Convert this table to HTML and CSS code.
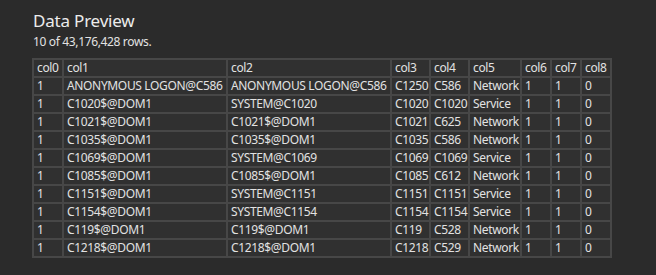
FILE: index.html
```html
<!DOCTYPE html>
<html lang="en">
<head>
    <meta charset="UTF-8">
    <title>Data Preview</title>
    <link rel="stylesheet" href="styles.css">
</head>
<body>
<div class="preview">
    <h1 class="title">Data Preview</h1>
    <p class="count">10 of 43,176,428 rows.</p>
    <table class="grid">
        <thead>
        <tr>
            <th class="c0">col0</th><th class="c1">col1</th><th class="c2">col2</th>
            <th class="c3">col3</th><th class="c4">col4</th><th class="c5">col5</th>
            <th class="c6">col6</th><th class="c7">col7</th><th class="c8">col8</th>
        </tr>
        </thead>
        <tbody>
        <tr><td>1</td><td>ANONYMOUS LOGON@C586</td><td>ANONYMOUS LOGON@C586</td><td>C1250</td><td>C586</td><td>Network</td><td>1</td><td>1</td><td>0</td></tr>
        <tr><td>1</td><td>C1020$@DOM1</td><td>SYSTEM@C1020</td><td>C1020</td><td>C1020</td><td>Service</td><td>1</td><td>1</td><td>0</td></tr>
        <tr><td>1</td><td>C1021$@DOM1</td><td>C1021$@DOM1</td><td>C1021</td><td>C625</td><td>Network</td><td>1</td><td>1</td><td>0</td></tr>
        <tr><td>1</td><td>C1035$@DOM1</td><td>C1035$@DOM1</td><td>C1035</td><td>C586</td><td>Network</td><td>1</td><td>1</td><td>0</td></tr>
        <tr><td>1</td><td>C1069$@DOM1</td><td>SYSTEM@C1069</td><td>C1069</td><td>C1069</td><td>Service</td><td>1</td><td>1</td><td>0</td></tr>
        <tr><td>1</td><td>C1085$@DOM1</td><td>C1085$@DOM1</td><td>C1085</td><td>C612</td><td>Network</td><td>1</td><td>1</td><td>0</td></tr>
        <tr><td>1</td><td>C1151$@DOM1</td><td>SYSTEM@C1151</td><td>C1151</td><td>C1151</td><td>Service</td><td>1</td><td>1</td><td>0</td></tr>
        <tr><td>1</td><td>C1154$@DOM1</td><td>SYSTEM@C1154</td><td>C1154</td><td>C1154</td><td>Service</td><td>1</td><td>1</td><td>0</td></tr>
        <tr><td>1</td><td>C119$@DOM1</td><td>C119$@DOM1</td><td>C119</td><td>C528</td><td>Network</td><td>1</td><td>1</td><td>0</td></tr>
        <tr><td>1</td><td>C1218$@DOM1</td><td>C1218$@DOM1</td><td>C1218</td><td>C529</td><td>Network</td><td>1</td><td>1</td><td>0</td></tr>
        </tbody>
    </table>
</div>
</body>
</html>
```
FILE: styles.css
```css
html,body{margin:0;padding:0;}
body{
    background:#2b2b2b;
    color:#e2e2e2;
    font:12px/1.4 "Noto Sans", "Open Sans", sans-serif;
    letter-spacing:-0.35px;
}
.preview{
    padding:9px 0 0 32px;
}
.title{
    margin:0 0 0 1px;
    font-size:17px;
    font-weight:normal;
    line-height:24px;
    letter-spacing:-0.2px;
    color:#ececec;
}
.count{
    margin:0 0 0 1px;
    line-height:18px;
    height:25px;
}
.grid{
    table-layout:fixed;
    border-spacing:2px;
    background:#474747;
    width:580px;
}
.grid th,.grid td{
    background:#303030;
    height:16px;
    padding:0 0 0 3px;
    font-weight:normal;
    text-align:left;
    white-space:nowrap;
    overflow:hidden;
    line-height:16px;
}
.c0{width:25px;}
.c1{width:159px;}
.c2{width:159px;}
.c3{width:34px;}
.c4{width:34px;}
.c5{width:47px;}
.c6{width:25px;}
.c7{width:25px;}
.c8{width:25px;}
```
